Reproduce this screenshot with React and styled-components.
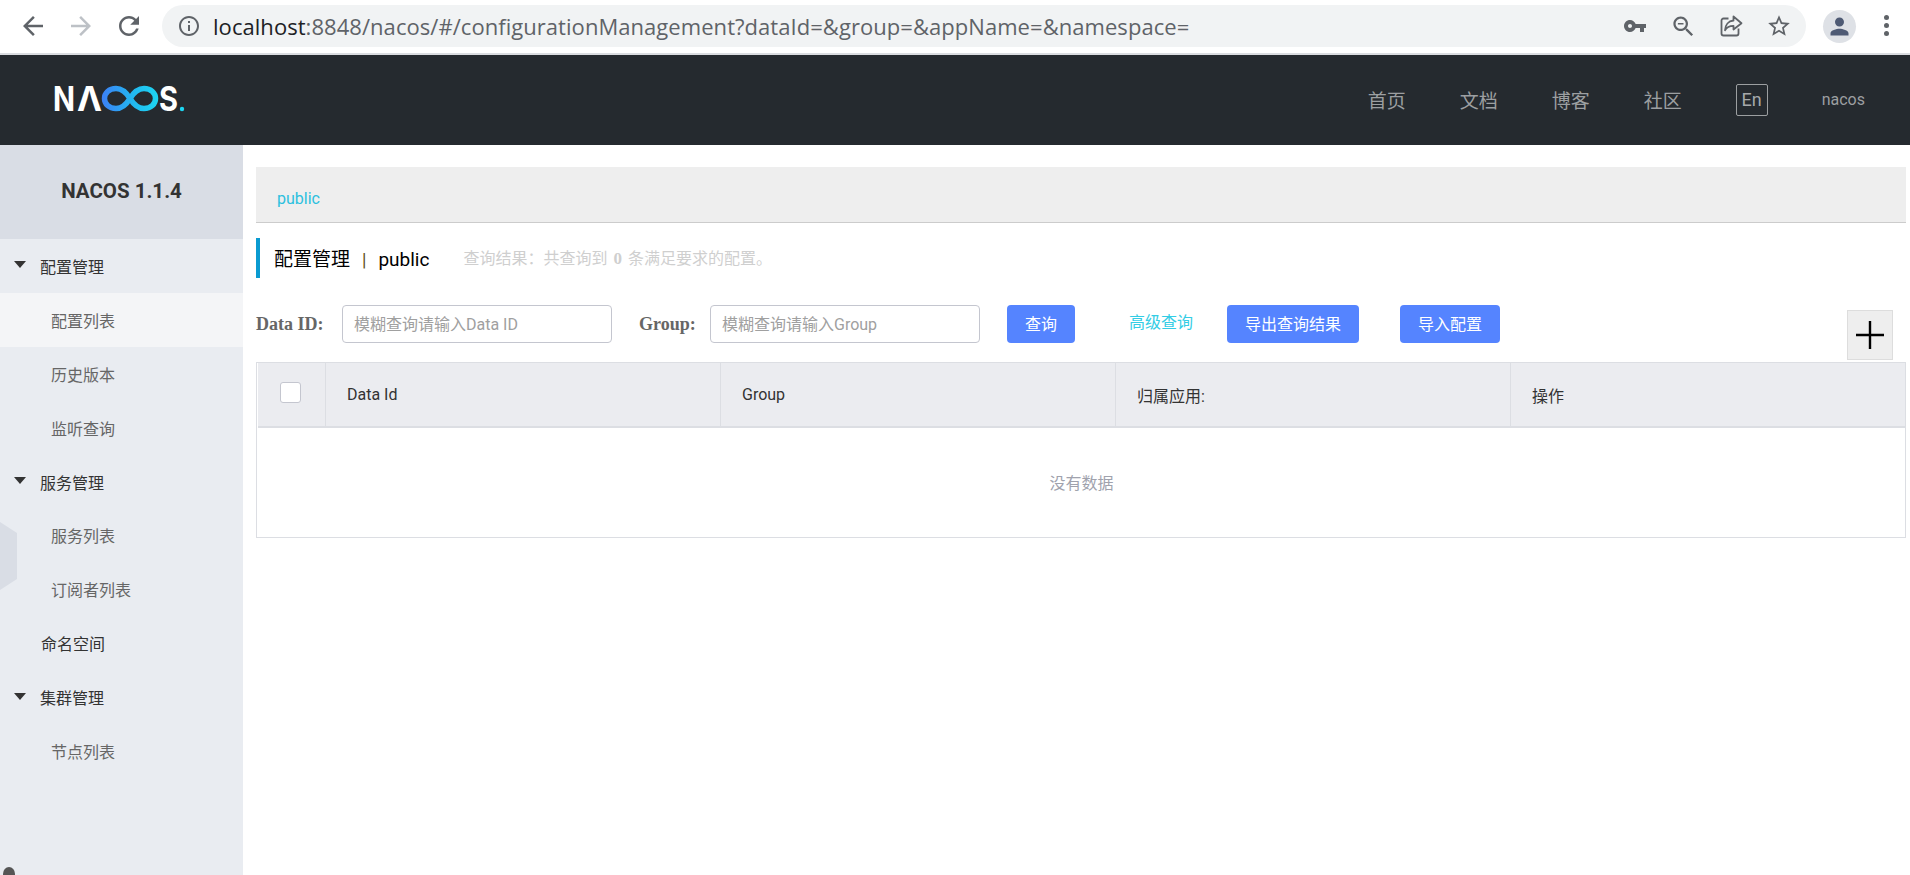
import React from 'react';
import styled, {createGlobalStyle} from 'styled-components';

const sans = `Roboto, "Noto Sans CJK SC", sans-serif`;

const GlobalStyle = createGlobalStyle`
  html, body {
    margin: 0;
    padding: 0;
    background: #fff;
    font-family: ${sans};
  }
  * { box-sizing: border-box; }
`;

const Page = styled.div`
  width: 1910px;
  height: 875px;
  overflow: hidden;
  display: flex;
  flex-direction: column;
`;

/* browser chrome */
const BrowserBar = styled.div`
  height: 55px;
  flex: none;
  display: flex;
  align-items: flex-start;
  padding: 5px 0 0 18px;
  background: #fff;
  border-bottom: 2px solid #dadce0;
`;

const NavButton = styled.div`
  width: 30px;
  height: 42px;
  margin-right: 18px;
  display: flex;
  align-items: center;
  justify-content: center;
  color: ${props => (props.$off ? '#bdc1c6' : '#5f6368')};
`;

const AddressPill = styled.div`
  width: 1644px;
  height: 42px;
  padding: 0 15px;
  display: flex;
  align-items: center;
  border-radius: 21px;
  background: #f1f3f4;
  color: #5f6368;
`;

const UrlText = styled.div`
  margin-left: 12px;
  font-family: "Open Sans", sans-serif;
  font-size: 22px;
  letter-spacing: 0.05px;
  white-space: nowrap;
  color: #5f6368;
  b {
    font-weight: 400;
    color: #202124;
  }
`;

const PillIcons = styled.div`
  margin-left: auto;
  display: flex;
  gap: 24px;
`;

const IconSlot = styled.div`
  width: 24px;
  height: 24px;
  display: flex;
  align-items: center;
  justify-content: center;
`;

const Avatar = styled.div`
  width: 33px;
  height: 33px;
  margin: 5px 0 0 17px;
  flex: none;
  display: flex;
  align-items: center;
  justify-content: center;
  border-radius: 50%;
  background: #dee1e6;
  color: #4e5a74;
`;

const MenuDots = styled.div`
  margin: 10px 0 0 28px;
  display: flex;
  flex-direction: column;
  gap: 3px;
  i {
    display: block;
    width: 5px;
    height: 5px;
    border-radius: 50%;
    background: #5f6368;
  }
`;

const Icon = ({d, size = 24}) => (
  <svg width={size} height={size} viewBox="0 0 24 24" fill="currentColor" style={{flex: 'none'}}>
    <path d={d} />
  </svg>
);

/* site header */
const Header = styled.div`
  height: 90px;
  flex: none;
  display: flex;
  align-items: center;
  padding: 0 45px 0 52px;
  background: #252a2f;
`;

const LogoSvg = styled.svg`
  margin-bottom: 3px;
  flex: none;
`;

const HeaderNav = styled.div`
  margin-left: auto;
  margin-bottom: 1px;
  display: flex;
  align-items: center;
  gap: 54px;
  color: #9c9fa1;
`;

const HeaderLink = styled.a`
  font-size: 19px;
`;

const LangBox = styled.div`
  width: 32px;
  height: 32px;
  display: flex;
  align-items: center;
  justify-content: center;
  border: 1px solid #9c9fa1;
  border-radius: 2px;
  font-size: 18px;
  color: #a5a8aa;
`;

const UserName = styled.div`
  font-size: 16px;
`;

const Body = styled.div`
  flex: 1;
  display: flex;
  min-height: 0;
`;

/* left menu */
const Side = styled.div`
  position: relative;
  width: 243px;
  flex: none;
  background: #e9ecf1;
  overflow: hidden;
`;

const SideTitle = styled.div`
  height: 94px;
  display: flex;
  align-items: center;
  justify-content: center;
  padding-bottom: 2px;
  background: #d9dde5;
  font-size: 20.5px;
  font-weight: 700;
  color: #333;
`;

const MenuRow = styled.div`
  height: 53.9px;
  display: flex;
  align-items: center;
  padding-left: ${props => (props.$sub ? '51px' : '41px')};
  font-size: 16px;
  color: ${props => (props.$sub ? '#666' : '#333')};
  background: ${props => (props.$active ? '#f4f5f7' : 'transparent')};
`;

const Caret = styled.span`
  width: 0;
  height: 0;
  margin: -2px 14px 0 -27px;
  border-left: 6.5px solid transparent;
  border-right: 6.5px solid transparent;
  border-top: 7px solid #333;
`;

const HexDecor = styled.div`
  position: absolute;
  left: -17px;
  top: 377px;
  width: 34px;
  height: 68px;
  background: #d9dde5;
  clip-path: polygon(50% 0, 100% 16%, 100% 84%, 50% 100%, 0 84%, 0 16%);
`;

const BottomDot = styled.div`
  position: absolute;
  left: 3px;
  bottom: -6px;
  width: 12px;
  height: 14px;
  border-radius: 50%;
  background: #555;
`;

/* content */
const Main = styled.div`
  flex: 1;
  min-width: 0;
  padding: 22px 4px 0 13px;
`;

const NamespaceBar = styled.div`
  height: 56px;
  padding: 21px 0 0 21px;
  background: #eee;
  border-bottom: 1px solid #ccc;
  font-size: 16px;
  line-height: 22px;
  color: #2cc0de;
`;

const TitleRow = styled.div`
  height: 40px;
  margin-top: 15px;
  padding-bottom: 2px;
  display: flex;
  align-items: center;
  padding-left: 14px;
  border-left: 4px solid #0a9bd1;
`;

const TitleText = styled.div`
  font-size: 19px;
  color: #000;
`;

const TitleSep = styled.span`
  margin: 0 12px;
  font-size: 18px;
  color: #5c4a20;
`;

const ResultHint = styled.div`
  margin-left: 34px;
  font-size: 16px;
  color: #cfcfcf;
  strong {
    font-family: "Liberation Serif", serif;
    font-weight: 700;
    font-size: 17px;
    margin: 0 6px;
  }
`;

const FilterRow = styled.div`
  height: 57px;
  margin-top: 27px;
  display: flex;
  align-items: flex-start;
`;

const FieldLabel = styled.label`
  width: ${props => props.$w};
  flex: none;
  line-height: 38px;
  font-family: "Liberation Serif", serif;
  font-size: 18px;
  font-weight: 700;
  color: #666;
  white-space: nowrap;
`;

const SearchInput = styled.input`
  width: 270px;
  height: 38px;
  padding: 0 11px;
  margin-right: 27px;
  flex: none;
  border: 1px solid #c4c6cf;
  border-radius: 4px;
  outline: none;
  background: #fff;
  font-family: ${sans};
  font-size: 16px;
  &::placeholder {
    color: #a0a0a0;
    opacity: 1;
  }
`;

const PrimaryButton = styled.button`
  width: ${props => props.$w};
  height: 38px;
  margin-right: ${props => props.$gap};
  padding: 0 0 2px;
  flex: none;
  border: 0;
  border-radius: 4px;
  background: #5584ff;
  color: #fff;
  font-family: ${sans};
  font-size: 16px;
`;

const LinkButton = styled.a`
  width: 64px;
  margin-right: 34px;
  flex: none;
  line-height: 36px;
  font-size: 16px;
  white-space: nowrap;
  color: #33cde5;
`;

const AddBox = styled.div`
  width: 46px;
  height: 50px;
  margin: 5px 13px 0 auto;
  flex: none;
  display: flex;
  align-items: center;
  justify-content: center;
  background: #eee;
  border: 1px solid #ddd;
  color: #000;
`;

const Table = styled.div`
  height: 176px;
  padding: 0 0 0 1px;
  border: 1px solid #dcdee3;
`;

const HeadRow = styled.div`
  height: 65px;
  display: grid;
  grid-template-columns: 68px 395px 395px 395px 1fr;
  background: #ebecf0;
  border-bottom: 2px solid #dcdee3;
`;

const HeadCell = styled.div`
  display: flex;
  align-items: center;
  justify-content: ${props => (props.$center ? 'center' : 'flex-start')};
  padding-left: ${props => (props.$center ? '0' : '21px')};
  border-right: ${props => (props.$last ? '0' : '1px solid #dcdee3')};
  font-size: 16px;
  color: #333;
`;

const CheckBox = styled.span`
  width: 21px;
  height: 21px;
  margin: -5px 3px 0 0;
  background: #fff;
  border: 1px solid #c4c6cf;
  border-radius: 3px;
`;

const EmptyCell = styled.div`
  height: 109px;
  display: flex;
  align-items: center;
  justify-content: center;
  padding-bottom: 2px;
  font-size: 16px;
  color: #a0a2ad;
`;

const InfinityMark = () => (
  <>
    <defs>
      <linearGradient id="nacosLoop" gradientUnits="userSpaceOnUse" x1="48" y1="0" x2="104" y2="0">
        <stop offset="0" stopColor="#3c80f6" />
        <stop offset="0.55" stopColor="#22b8f0" />
        <stop offset="1" stopColor="#1dd6f2" />
      </linearGradient>
    </defs>
    <path
      d="M76 12.500C72 6 67.500 2.500 62 2.500C55 2.500 50.500 7 50.500 12.500C50.500 18 55 22.500 62 22.500C67.500 22.500 72 19 76 12.500C80 6 84.500 2.500 90 2.500C97 2.500 101.500 7 101.500 12.500C101.500 18 97 22.500 90 22.500C84.500 22.500 80 19 76 12.500Z"
      fill="none"
      stroke="url(#nacosLoop)"
      strokeWidth="5.500"
    />
  </>
);

const Logo = () => (
  <LogoSvg width="135" height="50" viewBox="-2 -12 135 50" role="img" aria-label="NACOS.">
    <g fill="#fff" fontFamily="Inter, sans-serif" fontWeight="700" fontSize="34">
      <text x="-1" y="25" textLength="22" lengthAdjust="spacingAndGlyphs">N</text>
      <text x="23" y="25" textLength="25" lengthAdjust="spacingAndGlyphs">Λ</text>
      <text x="105" y="25" textLength="19" lengthAdjust="spacingAndGlyphs">S</text>
    </g>
    <InfinityMark />
    <circle cx="128" cy="23" r="2.200" fill="#1dd6f2" />
  </LogoSvg>
);

const ShareIcon = () => (
  <svg width="24" height="24" viewBox="0 0 24 24" fill="none" stroke="currentColor" strokeWidth="1.800" strokeLinejoin="round">
    <path d="M9.500 4.500H4.500a2 2 0 0 0-2 2v13a2 2 0 0 0 2 2h13a2 2 0 0 0 2-2v-5" />
    <path d="M14.500 2.500l8 6.700-8 6.300v-3.700c-4 0-6.700 1-8.500 4.500 .2-5.500 3.500-9.300 8.500-9.800V2.500z" />
  </svg>
);

const sideMenu = [
  {label: '配置管理', caret: true},
  {label: '配置列表', sub: true, active: true},
  {label: '历史版本', sub: true},
  {label: '监听查询', sub: true},
  {label: '服务管理', caret: true},
  {label: '服务列表', sub: true},
  {label: '订阅者列表', sub: true},
  {label: '命名空间'},
  {label: '集群管理', caret: true},
  {label: '节点列表', sub: true},
];

const App = () => {
  return (
    <Page>
      <GlobalStyle />
      <BrowserBar>
        <NavButton><Icon size={30} d="M20 11H7.830l5.590-5.590L12 4l-8 8 8 8 1.410-1.410L7.830 13H20v-2z" /></NavButton>
        <NavButton $off><Icon size={30} d="M12 4l-1.410 1.410L16.170 11H4v2h12.170l-5.580 5.590L12 20l8-8z" /></NavButton>
        <NavButton><Icon size={30} d="M17.650 6.350C16.200 4.900 14.210 4 12 4c-4.420 0-7.990 3.580-7.990 8s3.570 8 7.990 8c3.730 0 6.840-2.550 7.730-6h-2.080c-.820 2.330-3.040 4-5.650 4-3.310 0-6-2.690-6-6s2.690-6 6-6c1.660 0 3.140.690 4.220 1.780L13 11h7V4l-2.350 2.350z" /></NavButton>
        <AddressPill>
          <Icon d="M11 7h2v2h-2zm0 4h2v6h-2zm1-9C6.480 2 2 6.480 2 12s4.480 10 10 10 10-4.480 10-10S17.520 2 12 2zm0 18c-4.410 0-8-3.590-8-8s3.590-8 8-8 8 3.590 8 8-3.590 8-8 8z" />
          <UrlText><b>localhost</b>:8848/nacos/#/configurationManagement?dataId=&amp;group=&amp;appName=&amp;namespace=</UrlText>
          <PillIcons>
            <IconSlot><Icon d="M12.650 10C11.830 7.670 9.610 6 7 6c-3.310 0-6 2.690-6 6s2.690 6 6 6c2.610 0 4.830-1.670 5.650-4H17v4h4v-4h2v-4H12.650zM7 14c-1.100 0-2-.900-2-2s.900-2 2-2 2 .900 2 2-.900 2-2 2z" /></IconSlot>
            <IconSlot><Icon size={27} d="M15.500 14h-.790l-.280-.270C15.410 12.590 16 11.110 16 9.500 16 5.910 13.090 3 9.500 3S3 5.910 3 9.500 5.910 16 9.500 16c1.610 0 3.090-.590 4.230-1.570l.270.280v.790l5 4.990L20.490 19l-4.990-5zm-6 0C7.010 14 5 11.990 5 9.500S7.010 5 9.500 5 14 7.010 14 9.500 11.990 14 9.500 14zM7 8.800h5v1.400H7z" /></IconSlot>
            <IconSlot><ShareIcon /></IconSlot>
            <IconSlot><Icon size={26} d="M22 9.240l-7.190-.620L12 2 9.190 8.630 2 9.240l5.460 4.730L5.820 21 12 17.270 18.180 21l-1.630-7.030L22 9.240zM12 15.400l-3.760 2.270 1-4.280-3.320-2.880 4.380-.380L12 6.100l1.710 4.040 4.380.380-3.320 2.880 1 4.280L12 15.400z" /></IconSlot>
          </PillIcons>
        </AddressPill>
        <Avatar><Icon size={27} d="M12 12c2.210 0 4-1.790 4-4s-1.790-4-4-4-4 1.790-4 4 1.790 4 4 4zm0 2c-2.670 0-8 1.340-8 4v2h16v-2c0-2.660-5.330-4-8-4z" /></Avatar>
        <MenuDots><i /><i /><i /></MenuDots>
      </BrowserBar>

      <Header>
        <Logo />
        <HeaderNav>
          <HeaderLink>首页</HeaderLink>
          <HeaderLink>文档</HeaderLink>
          <HeaderLink>博客</HeaderLink>
          <HeaderLink>社区</HeaderLink>
          <LangBox>En</LangBox>
          <UserName>nacos</UserName>
        </HeaderNav>
      </Header>

      <Body>
        <Side>
          <SideTitle>NACOS 1.1.4</SideTitle>
          {sideMenu.map((item) => (
            <MenuRow key={item.label} $sub={item.sub} $active={item.active}>
              {item.caret && <Caret />}
              {item.label}
            </MenuRow>
          ))}
          <HexDecor />
          <BottomDot />
        </Side>

        <Main>
          <NamespaceBar>public</NamespaceBar>

          <TitleRow>
            <TitleText>配置管理<TitleSep>|</TitleSep>public</TitleText>
            <ResultHint>查询结果：共查询到<strong>0</strong>条满足要求的配置。</ResultHint>
          </TitleRow>

          <FilterRow>
            <FieldLabel $w="86px">Data ID:</FieldLabel>
            <SearchInput placeholder="模糊查询请输入Data ID" />
            <FieldLabel $w="71px">Group:</FieldLabel>
            <SearchInput placeholder="模糊查询请输入Group" />
            <PrimaryButton $w="68px" $gap="54px">查询</PrimaryButton>
            <LinkButton>高级查询</LinkButton>
            <PrimaryButton $w="132px" $gap="41px">导出查询结果</PrimaryButton>
            <PrimaryButton $w="100px">导入配置</PrimaryButton>
            <AddBox>
              <svg width="28" height="28" viewBox="0 0 28 28">
                <path d="M14 0v28M0 14h28" stroke="currentColor" strokeWidth="2.400" />
              </svg>
            </AddBox>
          </FilterRow>

          <Table>
            <HeadRow>
              <HeadCell $center><CheckBox /></HeadCell>
              <HeadCell>Data Id</HeadCell>
              <HeadCell>Group</HeadCell>
              <HeadCell>归属应用:</HeadCell>
              <HeadCell $last>操作</HeadCell>
            </HeadRow>
            <EmptyCell>没有数据</EmptyCell>
          </Table>
        </Main>
      </Body>
    </Page>
  );
};

export default App;
